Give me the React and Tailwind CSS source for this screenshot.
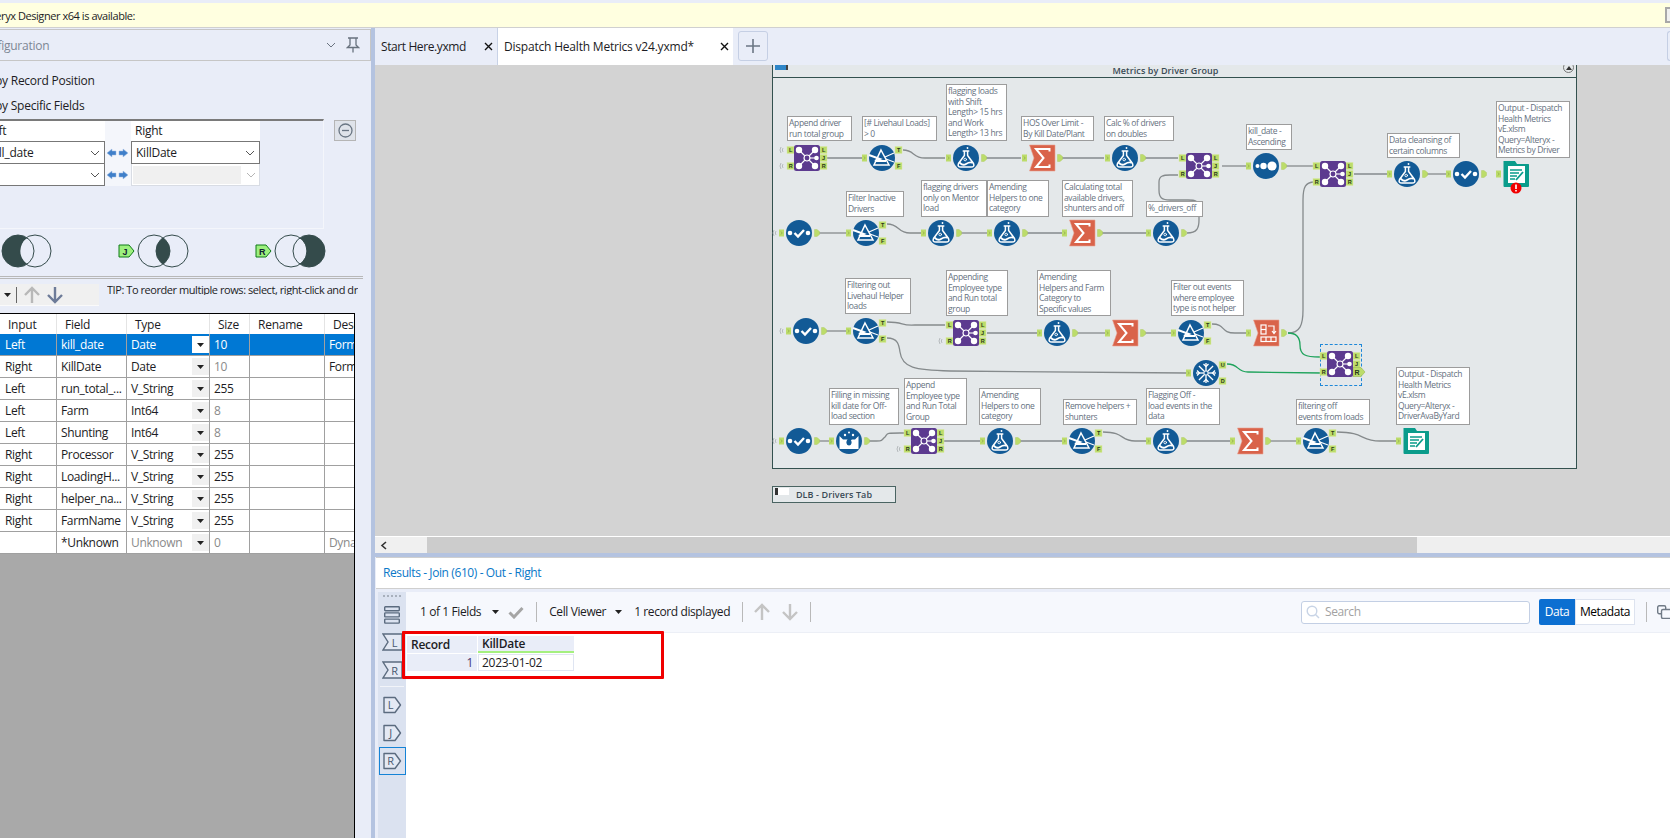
import React from "react";

const OX = 375, OY = 65;
const BLUE = "#125a96", PUR = "#5c3a8f", ORG = "#d9634a", TEAL = "#0a9c8b", PORT = "#bcdc6a";

function Port({ x, y, l, w = 7, h = 7 }) {
  return (
    <g>
      <rect x={x} y={y - h / 2} width={w} height={h} fill={PORT} stroke="#d9e8a8" strokeWidth="0.5" />
      {l && <text x={x + w / 2} y={y + 2} fontSize="5.5" fontWeight="700" textAnchor="middle" fill="#26361a" fontFamily="Liberation Sans, sans-serif">{l}</text>}
    </g>
  );
}
const InPort = ({ x = -20, y = 0 }) => (
  <g>
    <rect x={x} y={y - 3.5} width={5} height={7} fill={PORT} />
    <path d={`M${x + 2} ${y - 1.5}l1.2 1.5l-1.2 1.5`} fill="none" stroke="#7d9a3a" strokeWidth="0.6" />
  </g>
);
const OutPort = ({ x = 15.5, y = 0 }) => (
  <path d={`M${x} ${y - 3.5}h2.5l2.5 2v3l-2.5 2h-2.5z`} fill={PORT} stroke="#a9c85a" strokeWidth="0.4" />
);
const Wifi = ({ x, y }) => (
  <path d={`M${x} ${y - 3}q-2 3 0 6M${x + 2} ${y - 2}q-1.4 2 0 4`} fill="none" stroke="#a8adb0" strokeWidth="0.8" />
);

function Flask() {
  return (
    <g fill="none" stroke="#fff" strokeWidth="1.5" strokeLinecap="round">
      <circle cx="1.5" cy="-10" r="0.9" fill="#fff" stroke="none" />
      <path d="M-2.8 -7H2.8M-1.6 -7V-2.5L-7.5 5.5Q-9 9 -5 9H5Q9 9 7.5 5.5L1.6 -2.5V-7" />
      <path d="M-6 5Q-3 8 0 6T6 4.5" strokeWidth="1.8" />
      <circle cx="-0.8" cy="1.5" r="1.3" strokeWidth="0.9" />
    </g>
  );
}
function FilterI() {
  return (
    <g fill="none" stroke="#fff" strokeWidth="1.5">
      <path d="M-1 -8L7 7H-8Z" />
      <path d="M-13 -3L-2 1L-7 3H4" strokeWidth="2" />
      <path d="M3 -1L12 -5M4 1L12 4" strokeWidth="1.2" />
    </g>
  );
}
function Circle({ children }) {
  return (
    <g>
      <circle r="13" fill={BLUE} />
      {children}
    </g>
  );
}
function JoinI() {
  const p = [[-8, -8], [8, -8], [-8, 8], [8, 8]];
  return (
    <g>
      <rect x="-13" y="-13" width="26" height="26" rx="2.5" fill={PUR} />
      <g stroke="#fff" strokeWidth="1.1">
        {p.map((q, i) => <line key={i} x1="0" y1="0" x2={q[0]} y2={q[1]} />)}
        <line x1="0" y1="0" x2="9" y2="0" />
      </g>
      {p.map((q, i) => <circle key={i} cx={q[0]} cy={q[1]} r="3.2" fill="#fff" />)}
      <circle cx="9.5" cy="0" r="2.3" fill="#fff" />
      <circle r="3" fill={PUR} stroke="#fff" strokeWidth="1.2" />
    </g>
  );
}
function Notched({ children }) {
  return (
    <g>
      <path d="M-12.5 -13H13V13H-12.5L-8 0Z" fill={ORG} stroke="#e9a292" strokeWidth="0.6" />
      {children}
    </g>
  );
}

function NodeSvg({ t, wl, wr, wi, selR, err }) {
  let body = null;
  let ports = null;
  if (t === "join") {
    body = <JoinI />;
    ports = (
      <>
        {wl && <Wifi x={-26} y={-8} />}
        {wr && <Wifi x={-26} y={8} />}
        <Port x={-20} y={-8} l="L" />
        <Port x={-20} y={8} l="R" />
        <Port x={13} y={-8} l="L" />
        <Port x={13} y={0} l="J" />
        {selR ? (
          <g>
            <path d="M13 3.5h8l4 4.5l-4 4.5h-8z" fill={PORT} stroke="#8fb040" strokeWidth="0.5" />
            <text x="17" y="11" fontSize="7" fontWeight="700" textAnchor="middle" fill="#26361a" fontFamily="Liberation Sans, sans-serif">R</text>
          </g>
        ) : <Port x={13} y={8} l="R" />}
      </>
    );
  }
  if (t === "filter") {
    body = <Circle><FilterI /></Circle>;
    ports = <><InPort /><Port x={13} y={-8} l="T" /><Port x={13} y={8} l="F" /></>;
  }
  if (t === "flask") {
    body = <Circle><Flask /></Circle>;
    ports = <><InPort /><OutPort /></>;
  }
  if (t === "select") {
    body = (
      <Circle>
        <circle cx="-9" cy="0" r="2.3" fill="#fff" />
        <path d="M-4.5 0L-1 3.5L5 -3" stroke="#fff" strokeWidth="2.4" fill="none" />
        <circle cx="9" cy="0" r="2.3" fill="#fff" />
      </Circle>
    );
    ports = <>{wi && <Wifi x={-25} y={0} />}<InPort /><OutPort /></>;
  }
  if (t === "sort") {
    body = (
      <Circle>
        <circle cx="-8.5" r="2" fill="#fff" />
        <circle cx="-2.5" r="3.2" fill="#fff" />
        <circle cx="6" r="4.6" fill="#fff" />
      </Circle>
    );
    ports = <><InPort /><OutPort /></>;
  }
  if (t === "sum") {
    body = (
      <Notched>
        <path d="M7.5 -6.5V-9H-6L1.5 0L-6 9H7.5V6.5" fill="none" stroke="#fff" strokeWidth="2" />
      </Notched>
    );
    ports = <><InPort /><OutPort /></>;
  }
  if (t === "cross") {
    body = (
      <Notched>
        <g fill="none" stroke="#fff" strokeWidth="1.2">
          <rect x="-5" y="-8" width="5" height="9" />
          <path d="M-5 -3.5H0" />
          <path d="M2 -7H8V0M6 -2L8 0.5L10 -2" />
          <rect x="-5" y="4" width="15" height="4.5" />
          <path d="M0 4V8.5M5 4V8.5" />
        </g>
      </Notched>
    );
    ports = <><InPort /><OutPort /></>;
  }
  if (t === "crown") {
    body = (
      <Circle>
        <path d="M-9.5 -5V8H9.5V-5L6 -1.5L3 -1.5Q1.5 0 0 -1.5L-3 -1.5L-6 -1.5Z" fill="#fff" />
        <path d="M0 -4Q-3 0 -2.6 2Q-2 4.5 0 4.5Q2 4.5 2.6 2Q3 0 0 -4Z" fill={BLUE} />
        <circle cx="-4" cy="-6" r="1.2" fill="#fff" />
        <circle cx="4" cy="-6" r="1.2" fill="#fff" />
        <circle cx="0" cy="-8.5" r="1" fill="#fff" />
      </Circle>
    );
    ports = <><InPort /><OutPort /></>;
  }
  if (t === "unique") {
    body = (
      <Circle>
        <g stroke="#fff" strokeWidth="1.3">
          {[0, 45, 90, 135].map((a) => <line key={a} x1="-10" y1="0" x2="10" y2="0" transform={`rotate(${a})`} />)}
          {[0, 90, 180, 270].map((a) => <path key={a} d="M-2.5 -9L0 -6.5L2.5 -9" fill="none" transform={`rotate(${a})`} />)}
        </g>
        <circle r="2" fill={BLUE} stroke="#fff" strokeWidth="0.8" />
      </Circle>
    );
    ports = <><InPort /><Port x={13} y={-8} l="U" /><Port x={13} y={8} l="D" /></>;
  }
  if (t === "output") {
    body = (
      <g>
        <path d="M-12.5 -13H-1L1 -10H12.5Q13 -10 13 -9V12Q13 13 12 13H-11.5Q-12.5 13 -12.5 12Z" fill={TEAL} />
        <rect x="-8" y="-8" width="17" height="17" fill="#fff" />
        <path d="M-6 -4H6M-6 -1H3M-6 2H1M-6 5H-1" stroke={TEAL} strokeWidth="1.4" />
        <path d="M0 6L7 -2" stroke={TEAL} strokeWidth="1.8" />
      </g>
    );
    ports = <InPort />;
  }
  return (
    <>
      {ports}
      {body}
      {err && (
        <g>
          <circle cx="0" cy="14" r="5.5" fill="#f00000" />
          <rect x="-0.8" y="10.5" width="1.6" height="4.5" fill="#fff" />
          <rect x="-0.8" y="16" width="1.6" height="1.5" fill="#fff" />
        </g>
      )}
    </>
  );
}

const nodes = [
  { t: "join", x: 807, y: 158, wl: 1, wr: 1 }, { t: "filter", x: 882, y: 158 }, { t: "flask", x: 966, y: 158 },
  { t: "sum", x: 1042, y: 158 }, { t: "flask", x: 1125, y: 158 }, { t: "join", x: 1199, y: 166 },
  { t: "sort", x: 1266, y: 166 }, { t: "join", x: 1333, y: 174 }, { t: "flask", x: 1407, y: 174 },
  { t: "select", x: 1466, y: 174 }, { t: "output", x: 1516, y: 174, err: 1 },
  { t: "select", x: 799, y: 233, wi: 1 }, { t: "filter", x: 866, y: 233 }, { t: "flask", x: 941, y: 233 },
  { t: "flask", x: 1007, y: 233 }, { t: "sum", x: 1082, y: 233 }, { t: "flask", x: 1166, y: 233 },
  { t: "select", x: 806, y: 331, wi: 1 }, { t: "filter", x: 866, y: 331 }, { t: "join", x: 966, y: 333, wr: 1 },
  { t: "flask", x: 1057, y: 333 }, { t: "sum", x: 1125, y: 333 }, { t: "filter", x: 1191, y: 333 },
  { t: "cross", x: 1266, y: 333 }, { t: "unique", x: 1206, y: 373 }, { t: "join", x: 1340, y: 364, selR: 1 },
  { t: "select", x: 799, y: 441, wi: 1 }, { t: "crown", x: 849, y: 441 }, { t: "join", x: 924, y: 441, wr: 1 },
  { t: "flask", x: 1000, y: 441 }, { t: "filter", x: 1082, y: 441 }, { t: "flask", x: 1166, y: 441 },
  { t: "sum", x: 1250, y: 441 }, { t: "filter", x: 1316, y: 441 }, { t: "output", x: 1416, y: 441 },
];

const notes = [
  [787, 116, 852, 141, "Append driver", "run total group"],
  [862, 116, 937, 141, "[# Livehaul Loads]", "> 0"],
  [946, 84, 1007, 141, "flagging loads", "with Shift", "Length> 15 hrs", "and Work", "Length> 13 hrs"],
  [1021, 116, 1094, 141, "HOS Over Limit -", "By Kill Date/Plant"],
  [1104, 116, 1174, 141, "Calc % of drivers", "on doubles"],
  [1246, 124, 1292, 150, "kill_date -", "Ascending"],
  [1387, 133, 1460, 158, "Data cleansing of", "certain columns"],
  [1496, 101, 1570, 158, "Output - Dispatch", "Health Metrics", "vE.xlsm", "Query=Alteryx -", "Metrics by Driver"],
  [846, 191, 904, 217, "Filter Inactive", "Drivers"],
  [921, 180, 987, 217, "flagging drivers", "only on Mentor", "load"],
  [987, 180, 1049, 217, "Amending", "Helpers to one", "category"],
  [1062, 180, 1133, 217, "Calculating total", "available drivers,", "shunters and off"],
  [1146, 201, 1203, 217, "%_drivers_off"],
  [845, 278, 911, 314, "Filtering out", "Livehaul Helper", "loads"],
  [946, 270, 1008, 316, "Appending", "Employee type", "and Run total", "group"],
  [1037, 270, 1111, 316, "Amending", "Helpers and Farm", "Category to", "Specific values"],
  [1171, 280, 1244, 316, "Filter out events", "where employee", "type is not helper"],
  [829, 388, 899, 425, "Filling in missing", "kill date for Off-", "load section"],
  [904, 378, 967, 425, "Append", "Employee type", "and Run Total", "Group"],
  [979, 388, 1041, 425, "Amending", "Helpers to one", "category"],
  [1063, 399, 1137, 425, "Remove helpers +", "shunters"],
  [1146, 388, 1220, 425, "Flagging Off -", "load events in the", "data"],
  [1296, 399, 1370, 425, "filtering off", "events from loads"],
  [1396, 367, 1470, 425, "Output - Dispatch", "Health Metrics", "vE.xlsm", "Query=Alteryx -", "DriverAvaByYard"],
];

const wires = [
  "M823 158H862", "M903 150C915 150 912 158 925 158H945", "M986 158H1021", "M1061 158H1104", "M1145 158H1178",
  "M1222 166H1247", "M1286 166H1313", "M1354 174H1387", "M1427 174H1448",
  "M1187 233C1197 233 1199 228 1199 220V208C1199 201 1195 200 1188 200H1170C1162 200 1159 198 1159 190V182C1159 176 1163 175 1170 175H1178",
  "M819 233H847", "M887 224C900 224 897 233 910 233H922", "M961 233H988", "M1027 233H1063", "M1102 233H1146",
  "M825 331H848", "M887 322C905 322 900 326 915 325H945", "M987 333H1040", "M1077 333H1107", "M1145 333H1173",
  "M1212 324C1226 324 1220 333 1235 333H1248",
  "M1288 333C1300 333 1303 325 1303 310V200C1303 186 1306 183 1313 182",
  "M887 338C898 338 899 345 900 352C902 368 915 370 950 371L1186 373",
  "M819 441H830", "M869 441C885 441 880 441 885 437C888 433 885 433 900 433H905", "M944 441H982", "M1019 441H1064",
  "M1103 432C1125 432 1120 441 1135 441H1146", "M1186 441H1232", "M1270 441H1298", "M1337 432C1365 432 1360 441 1380 441H1398",
];
const greens = ["M1288 333C1298 333 1300 340 1300 345C1300 355 1305 357 1320 357H1323", "M1227 364C1240 364 1236 372 1248 372L1322 373"];

const rows = [
  ["Left", "kill_date", "Date", "10", "Form", 1, 0],
  ["Right", "KillDate", "Date", "10", "Form", 0, 1],
  ["Left", "run_total_...", "V_String", "255", "", 0, 0],
  ["Left", "Farm", "Int64", "8", "", 0, 1],
  ["Left", "Shunting", "Int64", "8", "", 0, 1],
  ["Right", "Processor", "V_String", "255", "", 0, 0],
  ["Right", "LoadingH...", "V_String", "255", "", 0, 0],
  ["Right", "helper_na...", "V_String", "255", "", 0, 0],
  ["Right", "FarmName", "V_String", "255", "", 0, 0],
  ["", "*Unknown", "Unknown", "0", "Dyna", 2, 1],
];

const Caret = ({ c = "#222" }) => (
  <svg width="7" height="4" viewBox="0 0 7 4"><path d="M0 0H7L3.5 4Z" fill={c} /></svg>
);
const Chev = ({ c = "#555" }) => (
  <svg width="10" height="6" viewBox="0 0 10 6"><path d="M1 1L5 5L9 1" fill="none" stroke={c} strokeWidth="1" /></svg>
);
const ArrowPair = () => (
  <svg width="22" height="10" viewBox="0 0 22 10">
    <path d="M0 5L5 1V3H9V7H5V9Z" fill="#3f7fc9" stroke="#9dbbe0" strokeWidth="0.5" />
    <path d="M21 5L16 1V3H12V7H16V9Z" fill="#3f7fc9" stroke="#9dbbe0" strokeWidth="0.5" />
  </svg>
);
const Arrow = ({ d, c }) => (
  <svg width="18" height="18" viewBox="0 0 18 18" fill="none" stroke={c} strokeWidth="2.4">
    {d === "up" ? <path d="M9 17V2M2 9L9 2L16 9" /> : <path d="M9 1V16M2 9L9 16L16 9" />}
  </svg>
);
function Venn({ tag, fill, w, cx1, cx2 }) {
  const id = "v" + fill;
  return (
    <svg width={w} height="34" viewBox={`0 0 ${w} 34`} className="shrink-0">
      <defs>
        <clipPath id={id}><circle cx={cx1} cy="17" r="16" /></clipPath>
      </defs>
      {tag && (
        <g>
          <path d="M1 11H11L16 17L11 23H1Z" fill="#9df07e" stroke="#0f7a18" strokeWidth="1" />
          <text x="7" y="20.5" fontSize="9" fontWeight="700" textAnchor="middle" fill="#123" fontFamily="Liberation Sans, sans-serif">{tag}</text>
        </g>
      )}
      {fill === "l" && <path d={`M${cx1} 1A16 16 0 1 0 ${cx1} 33A16 16 0 0 0 ${cx1 + 9} 30A16 16 0 0 1 ${cx1 + 9} 4A16 16 0 0 0 ${cx1} 1Z`} fill="#344b4b" />}
      {fill === "m" && <circle cx={cx2} cy="17" r="16" fill="#344b4b" clipPath={`url(#${id})`} />}
      {fill === "r" && <path d={`M${cx2} 1A16 16 0 1 1 ${cx2} 33A16 16 0 0 1 ${cx2 - 9} 30A16 16 0 0 0 ${cx2 - 9} 4A16 16 0 0 1 ${cx2} 1Z`} fill="#344b4b" />}
      <circle cx={cx1} cy="17" r="16" fill="none" stroke="#344b4b" strokeWidth="1" />
      <circle cx={cx2} cy="17" r="16" fill="none" stroke="#344b4b" strokeWidth="1" />
    </svg>
  );
}
function RailTag({ l, outlined }) {
  return outlined ? (
    <svg width="20" height="20" viewBox="0 0 20 20">
      <path d="M2 2.5H13L18.5 10L13 17.5H2Z" fill="#e4e9f4" stroke="#5b6b7f" strokeWidth="1.4" strokeLinejoin="round" />
      <text x="8.5" y="14" fontSize="11" textAnchor="middle" fill="#4a5a70" fontFamily="Open Sans, sans-serif">{l}</text>
    </svg>
  ) : (
    <svg width="20" height="20" viewBox="0 0 20 20">
      <path d="M1 2H20V18H1L6 10Z" fill="#e4e9f4" stroke="#5b6b7f" strokeWidth="1.4" />
      <text x="12.5" y="14.5" fontSize="11" textAnchor="middle" fill="#4a5a70" fontFamily="Open Sans, sans-serif">{l}</text>
    </svg>
  );
}

export default function App() {
  return (
    <div className="w-[1670px] h-[838px] flex flex-col overflow-hidden bg-[#e9edf8] text-[12px] leading-none text-[#1c1c24] tracking-[-0.25px] font-['Open_Sans',sans-serif]">
      <div className="h-[3px] shrink-0" />
      <div className="h-[25px] shrink-0 bg-[#ffffe0] border-b border-[#d0d0d0] flex items-center overflow-hidden">
        <span className="-ml-[17px] whitespace-nowrap text-[11px] tracking-[-0.44px]">Alteryx Designer x64 is available:</span>
        <span className="ml-auto w-[5px] h-[16px] bg-[#f0f0f0] border-l-2 border-y-2 border-[#a8a8a8]" />
      </div>

      <div className="flex-1 flex min-h-0">
        {/* left panel */}
        <div className="w-[371px] shrink-0 flex flex-col overflow-hidden">
          <div className="mt-px h-[32px] shrink-0 border-y border-r border-[#c6c6c6] flex items-center pr-[10px] text-[#7d8794] overflow-hidden">
            <span className="-ml-[24px] whitespace-nowrap relative top-px">Configuration</span>
            <span className="ml-auto mr-[10px]"><Chev c="#6a7380" /></span>
            <svg width="14" height="16" viewBox="0 0 14 16" fill="none" stroke="#68727e" strokeWidth="1.3">
              <path d="M2 1H12M4 1V8L1.5 10.5H12.5L10 8V1M7 10.5V15.5" />
            </svg>
          </div>
          <div className="mt-[8px] h-[25px] flex items-center whitespace-nowrap"><span className="-ml-[5px] relative -top-px">by Record Position</span></div>
          <div className="h-[25px] flex items-center whitespace-nowrap"><span className="-ml-[5px] relative -top-px">by Specific Fields</span></div>

          <div className="flex shrink-0 items-start">
            <div className="w-[324px] h-[110px] border-t-2 border-t-[#7a7a7a] border-r border-b border-[#f4f6fb] overflow-hidden">
              <div className="grid grid-cols-[105px_26px_129px] w-[260px]">
                <div className="h-[20px] bg-white flex items-center overflow-hidden"><span className="-ml-[14px]">Left</span></div>
                <div className="h-[20px] bg-[#f4f6fb]" />
                <div className="h-[20px] bg-white flex items-center pl-[4px]">Right</div>

                <div className="h-[23px] bg-white border border-l-0 border-[#777] flex items-center justify-between pr-[4px] overflow-hidden">
                  <span className="-ml-[10px]">kill_date</span><Chev />
                </div>
                <div className="h-[23px] bg-[#f4f6fb] flex items-center justify-center"><ArrowPair /></div>
                <div className="h-[23px] bg-white border border-[#777] flex items-center justify-between pl-[4px] pr-[4px]">
                  <span>KillDate</span><Chev />
                </div>

                <div className="h-[22px] bg-white border-b border-r border-[#777] flex items-center justify-end pr-[4px]"><Chev /></div>
                <div className="h-[22px] bg-[#f4f6fb] flex items-center justify-center"><ArrowPair /></div>
                <div className="h-[22px] bg-white border-x border-b border-[#d8dce4] flex items-center p-[1px]">
                  <div className="w-[108px] h-[18px] bg-[#f0f0f0]" />
                  <span className="ml-[5px]"><Chev c="#b5b5b5" /></span>
                </div>
              </div>
            </div>
            <div className="ml-[10px] mt-px w-[22px] h-[21px] bg-[#dfe3ea] border border-[#b5b5b5] flex items-center justify-center">
              <svg width="15" height="15" viewBox="0 0 15 15" fill="none" stroke="#6a7684" strokeWidth="1.3">
                <circle cx="7.5" cy="7.5" r="6.5" /><path d="M4 7.5H11" />
              </svg>
            </div>
          </div>

          <div className="mt-[5px] h-[34px] shrink-0 flex">
            <Venn fill="l" w={53} cx1={18} cx2={35} />
            <div className="ml-[65px]"><Venn tag="J" fill="m" w={72} cx1={36} cx2={54} /></div>
            <div className="ml-[65px]"><Venn tag="R" fill="r" w={72} cx1={36} cx2={54} /></div>
          </div>

          <div className="mt-[8px] h-[3px] w-[363px] shrink-0 border-y border-[#b8b8b8]" />

          <div className="mt-[5px] h-[22px] shrink-0 flex items-start">
            <div className="w-[99px] h-[22px] bg-[#f0f0f0] border-b border-[#fafafa] flex items-center pl-[4px]">
              <Caret />
              <span className="ml-[5px] w-px h-[16px] bg-[#666]" />
              <span className="ml-[6px]"><Arrow d="up" c="#b8b8b8" /></span>
              <span className="ml-[5px]"><Arrow d="down" c="#6d7b98" /></span>
            </div>
            <div className="ml-[8px] w-[251px] overflow-hidden whitespace-nowrap text-[11px] tracking-[-0.44px]">TIP: To reorder multiple rows: select, right-click and drag</div>
          </div>

          <div className="mt-[7px] flex-1 w-[355px] bg-[#a9a9a9] border-t border-r-[1.5px] border-black overflow-hidden">
            <div className="grid grid-cols-[57px_70px_83px_40px_75px_30px] w-[355px] h-[20px] bg-white">
              {["Input", "Field", "Type", "Size", "Rename", "Description"].map((h) => (
                <div key={h} className="pl-[8px] pt-[5px] border-r border-[#e4e4e4] overflow-hidden whitespace-nowrap">{h}</div>
              ))}
            </div>
            {rows.map((r, i) => {
              const sel = r[5] === 1;
              const cell = "h-[22px] border-r border-b border-[#a0a0a0] flex items-center overflow-hidden whitespace-nowrap tracking-[-0.35px]";
              const muted = r[5] === 2 ? "text-[#8a8a8a]" : "";
              return (
                <div key={i} className={`grid grid-cols-[57px_70px_83px_40px_75px_30px] w-[355px] ${sel ? "bg-[#0078d4] text-white" : "bg-white"}`}>
                  <div className={`${cell} pl-[5px]`}>{r[0]}</div>
                  <div className={`${cell} pl-[4px]`}>{r[1]}</div>
                  <div className={`${cell} pl-[4px] justify-between`}>
                    <span className={muted}>{r[2]}</span>
                    <span className={`w-[17px] h-[17px] flex items-center justify-center ${sel ? "bg-white" : "bg-[#f0f0f0]"}`}><Caret /></span>
                  </div>
                  <div className={`${cell} pl-[4px] ${r[6] ? "text-[#8a8a8a]" : ""}`}>{r[3]}</div>
                  <div className={cell} />
                  <div className={`${cell} pl-[4px] ${muted} border-r-0`}>{r[4]}</div>
                </div>
              );
            })}
          </div>
        </div>

        <div className="w-[4px] shrink-0 bg-[#b4c3e0]" />

        {/* right column */}
        <div className="flex-1 min-w-0 flex flex-col">
          <div className="h-[37px] shrink-0 flex items-stretch">
            <div className="w-[123px] border-r border-[#c8d2e6] flex items-center pl-[6px] pr-[4px] justify-between">
              <span className="tracking-[-0.4px]">Start Here.yxmd</span>
              <svg width="9" height="9" viewBox="0 0 9 9" stroke="#111" strokeWidth="1.4"><path d="M1 1L8 8M8 1L1 8" /></svg>
            </div>
            <div className="w-[235px] bg-white flex items-center pl-[6px] pr-[4px] justify-between">
              <span className="tracking-[-0.2px]">Dispatch Health Metrics v24.yxmd*</span>
              <svg width="9" height="9" viewBox="0 0 9 9" stroke="#111" strokeWidth="1.4"><path d="M1 1L8 8M8 1L1 8" /></svg>
            </div>
            <div className="ml-[5px] mt-[3px] w-[30px] h-[30px] rounded-[3px] border border-[#c5cfe4] flex items-center justify-center">
              <svg width="14" height="14" viewBox="0 0 14 14" stroke="#6b7684" strokeWidth="1.6"><path d="M7 0V14M0 7H14" /></svg>
            </div>
            <div className="ml-auto mt-[3px] w-[3px] h-[30px] border-l border-y border-[#c5cfe4] rounded-l-[3px]" />
          </div>

          {/* canvas */}
          <div className="relative h-[471px] shrink-0 bg-[#d3d3d3] overflow-hidden">
            <div className="absolute left-[397px] top-0 w-[805px] h-[404px] bg-[#e4e8ea] border-b border-[#33514f] border-x-[1.5px]">
              <div className="h-[13px] border-b border-[#33514f] flex items-center justify-center pr-[18px] text-[9px] font-semibold tracking-[0.1px] text-[#3a4a55]">
                <span className="relative top-[-1px]">Metrics by Driver Group</span>
                <span className="absolute left-[2px] top-0 w-[13px] h-[5px] bg-[#2f86c8] border-r-2 border-[#444]" />
                <span className="absolute right-[2px] top-[-3px] w-[11px] h-[11px] rounded-full border border-[#777] bg-[#e4e8ea] flex items-center justify-center">
                  <svg width="6" height="4" viewBox="0 0 6 4"><path d="M0 4L3 0L6 4Z" fill="#333" /></svg>
                </span>
              </div>
            </div>

            <div className="absolute left-[397px] top-[421px] w-[124px] h-[17px] bg-[#e4e8ea] border-[1.5px] border-[#4a6462] flex items-center justify-center text-[9px] font-semibold tracking-[0.1px] text-[#3a4a55]">
              <span className="absolute left-[2px] top-[1px] w-[14px] h-[7px] bg-white border-l-[3px] border-[#333]" />
              <span>DLB - Drivers Tab</span>
            </div>

            <svg className="absolute left-0 top-0" width="1295" height="471" viewBox={`${OX} ${OY} 1295 471`} fill="none">
              {wires.map((d, i) => <path key={i} d={d} stroke="#858a8c" strokeWidth="1.3" />)}
              {greens.map((d, i) => <path key={i} d={d} stroke="#1fa35c" strokeWidth="1.3" />)}
            </svg>

            <div className="absolute left-[945px] top-[279px] w-[42px] h-[42px] border border-dashed border-[#1e88d8]" />

            {nodes.map((n, i) => (
              <svg key={i} className="absolute overflow-visible" width="60" height="40" viewBox="-30 -20 60 40"
                style={{ left: n.x - 30 - OX, top: n.y - 20 - OY }}>
                <NodeSvg {...n} />
              </svg>
            ))}

            {notes.map(([x1, y1, x2, y2, ...lines], i) => (
              <div key={i}
                className="absolute bg-white border-[1.5px] border-[#9c9c9c] pl-[1px] pt-[1px] text-[8.5px] leading-[10.6px] tracking-[-0.35px] text-[#667180] whitespace-nowrap overflow-hidden"
                style={{ left: x1 - OX, top: y1 - OY, width: x2 - x1, height: y2 - y1 }}>
                {lines.map((l, j) => <div key={j}>{l}</div>)}
              </div>
            ))}
          </div>

          <div className="h-px shrink-0 bg-white" />
          <div className="h-[16px] shrink-0 flex bg-[#efefef]">
            <div className="w-[52px] bg-[#f0f0f0] flex items-center pl-[5px]">
              <svg width="7" height="9" viewBox="0 0 7 9" fill="none" stroke="#333" strokeWidth="1.6"><path d="M6 1L2 4.5L6 8" /></svg>
            </div>
            <div className="w-[990px] bg-[#cccccc]" />
          </div>
          <div className="h-[4px] shrink-0 bg-[#b4c3e0]" />

          <div className="h-[32px] shrink-0 bg-white border-y border-[#cfcfcf] ml-px flex items-center pl-[7px] text-[#0a78c8] tracking-[-0.4px]">
            Results - Join (610) - Out - Right
          </div>

          {/* results */}
          <div className="relative flex-1 min-h-0 mt-[3px] flex pl-[3px]">
            <div className="w-[28px] shrink-0 bg-[#dbe2f0] flex flex-col items-center pt-[3px]">
              <div className="h-[2px] w-[18px] border-t-2 border-dotted border-[#a8b0bc]" />
              <svg className="mt-[9px]" width="16" height="18" viewBox="0 0 16 18" fill="none" stroke="#5b6b7f" strokeWidth="1.4">
                <rect x="0.7" y="0.7" width="14.6" height="4" rx="0.7" /><rect x="0.7" y="6.9" width="14.6" height="4" rx="0.7" /><rect x="0.7" y="13.1" width="14.6" height="4" rx="0.7" />
              </svg>
              <div className="mt-[8px]"><RailTag l="L" /></div>
              <div className="mt-[8px]"><RailTag l="R" /></div>
              <div className="mt-[6px] w-[24px] h-px bg-[#f2f4f9]" />
              <div className="mt-[8px]"><RailTag l="L" outlined /></div>
              <div className="mt-[8px]"><RailTag l="J" outlined /></div>
              <div className="mt-[4px] w-[27px] h-[28px] border border-[#1583d6] flex items-center justify-center"><RailTag l="R" outlined /></div>
            </div>
            <div className="flex-1 min-w-0 bg-white flex flex-col overflow-hidden">
              <div className="h-[41px] shrink-0 bg-[#f6f8fd] border-b border-[#eceff6] flex items-center pl-[14px] whitespace-nowrap tracking-[-0.4px]">
                <span>1 of 1 Fields</span>
                <span className="ml-[11px]"><Caret /></span>
                <svg className="ml-[9px]" width="16" height="13" viewBox="0 0 16 13" fill="none" stroke="#a5a5a5" strokeWidth="3"><path d="M1.5 6.5L6 11L14.5 2" /></svg>
                <span className="ml-[12px] w-px h-[20px] bg-[#b9b9b9]" />
                <span className="ml-[12px]">Cell Viewer</span>
                <span className="ml-[9px]"><Caret /></span>
                <span className="ml-[12px]">1 record displayed</span>
                <span className="ml-[12px] w-px h-[20px] bg-[#b9b9b9]" />
                <span className="ml-[10px]"><Arrow d="up" c="#c4c4c4" /></span>
                <span className="ml-[10px]"><Arrow d="down" c="#c4c4c4" /></span>
                <span className="ml-[11px] w-px h-[20px] bg-[#b9b9b9]" />
                <div className="ml-auto w-[229px] h-[23px] bg-white border border-[#c3cfe4] rounded-[3px] flex items-center pl-[4px] text-[#a2a2a2]">
                  <svg width="14" height="14" viewBox="0 0 14 14" fill="none" stroke="#c8d4e6" strokeWidth="1.4"><circle cx="6" cy="6" r="4.8" /><path d="M9.5 9.5L13 13" /></svg>
                  <span className="ml-[5px]">Search</span>
                </div>
                <div className="ml-[9px] w-[36px] h-[26px] bg-[#0c6fd1] text-white rounded-l-[2px] flex items-center justify-center">Data</div>
                <div className="w-[60px] h-[26px] bg-white border border-[#dde3ef] text-black flex items-center justify-center">Metadata</div>
                <span className="ml-[11px] w-px h-[20px] bg-[#b9b9b9]" />
                <svg className="ml-[10px] mr-[-2px] shrink-0" width="15" height="14" viewBox="0 0 15 14" fill="none" stroke="#707a86" strokeWidth="1.4">
                  <rect x="0.7" y="0.7" width="8" height="8" rx="1.5" /><rect x="4.5" y="4.5" width="9.5" height="9" rx="1.5" fill="#f6f8fd" />
                </svg>
              </div>
              <div className="ml-[1px] mt-[3px] grid grid-cols-[70px_96px] gap-[1px] w-[167px]">
                <div className="h-[17px] bg-[#e9edf8] flex items-center pl-[4px] font-semibold">Record</div>
                <div className="h-[17px] bg-[#e9edf8] border-b-2 border-[#a5f07f] flex items-center pl-[4px] font-semibold">KillDate</div>
                <div className="h-[17px] bg-[#e9edf8] flex items-center justify-end pr-[4px] text-[#4a3a70]">1</div>
                <div className="h-[17px] bg-white border border-[#dfe5f2] flex items-center pl-[3px]">2023-01-02</div>
              </div>
            </div>
            <div className="absolute left-[27px] top-[39px] w-[262px] h-[48px] border-[3px] border-[#f00000] rounded-[1px]" />
          </div>
        </div>
      </div>
    </div>
  );
}
